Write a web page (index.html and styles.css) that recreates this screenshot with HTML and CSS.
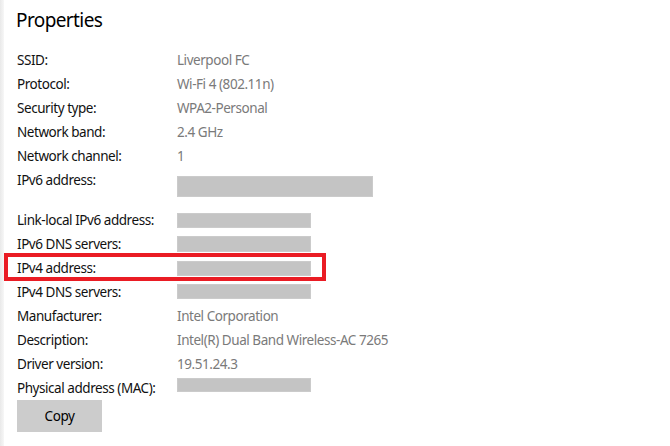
FILE: index.html
```html
<!DOCTYPE html>
<html>
<head>
<meta charset="utf-8">
<link rel="stylesheet" href="styles.css">
</head>
<body>
<div class="page">
  <div class="edge"></div>
  <div class="content">
    <h1 class="title">Properties</h1>
    <div class="props">
      <div class="row"><span class="label">SSID:</span><span class="value">Liverpool FC</span></div>
      <div class="row"><span class="label">Protocol:</span><span class="value">Wi-Fi 4 (802.11n)</span></div>
      <div class="row"><span class="label">Security type:</span><span class="value">WPA2-Personal</span></div>
      <div class="row"><span class="label">Network band:</span><span class="value">2.4 GHz</span></div>
      <div class="row"><span class="label">Network channel:</span><span class="value">1</span></div>
      <div class="row row-tall"><span class="label">IPv6 address:</span><span class="value"><span class="mask mask-v6"></span></span></div>
      <div class="row"><span class="label">Link-local IPv6 address:</span><span class="value"><span class="mask mask-ll"></span></span></div>
      <div class="row"><span class="label">IPv6 DNS servers:</span><span class="value"><span class="mask mask-dns6"></span></span></div>
      <div class="row row-marked"><span class="label">IPv4 address:</span><span class="value"><span class="mask mask-v4"></span></span><span class="highlight"></span></div>
      <div class="row"><span class="label">IPv4 DNS servers:</span><span class="value"><span class="mask mask-dns4"></span></span></div>
      <div class="row"><span class="label">Manufacturer:</span><span class="value">Intel Corporation</span></div>
      <div class="row"><span class="label">Description:</span><span class="value">Intel(R) Dual Band Wireless-AC 7265</span></div>
      <div class="row"><span class="label">Driver version:</span><span class="value">19.51.24.3</span></div>
      <div class="row"><span class="label">Physical address (MAC):</span><span class="value"><span class="mask mask-mac"></span></span></div>
    </div>
    <button class="copy">Copy</button>
  </div>
</div>
</body>
</html>
```
FILE: styles.css
```css
html, body {
  margin: 0;
  padding: 0;
  background: #ffffff;
}
body {
  font-family: "Noto Sans", "Open Sans", sans-serif;
  width: 670px;
  height: 446px;
  overflow: hidden;
}
.page {
  display: flex;
  height: 446px;
}
.edge {
  width: 4px;
  flex: none;
  background: linear-gradient(to right, #e9e9e9, #f7f7f7);
}
.content {
  flex: 1;
  padding-left: 13px;
  display: flex;
  flex-direction: column;
  align-items: flex-start;
}
.title {
  margin: 0;
  height: 48px;
  line-height: 41px;
  font-size: 19px;
  letter-spacing: -0.6px;
  font-weight: 400;
  color: #000;
  margin-left: -1px;
}
.props {
  display: flex;
  flex-direction: column;
}
.row {
  display: grid;
  grid-template-columns: 160px 1fr;
  height: 24px;
  line-height: 24px;
  font-size: 13.5px;
  letter-spacing: -0.45px;
  position: relative;
}
.row-tall {
  height: 40px;
}
.label {
  color: #111;
}
.value {
  color: #7a7a7a;
  position: relative;
}
.mask {
  display: block;
  background: #c4c4c4;
  box-shadow: inset 0 0 0 1px #cbcbcb;
  width: 134px;
  height: 15px;
  margin-top: 5px;
}
.mask-v6 {
  width: 196px;
  height: 21px;
  margin-top: 8px;
}
.mask-dns6 {
  height: 16px;
  margin-top: 4px;
}
.mask-v4 {
  margin-top: 5px;
}
.mask-dns4 {
  margin-top: 4px;
}
.mask-mac {
  height: 14px;
  margin-top: 2px;
}
.highlight {
  position: absolute;
  left: -13px;
  top: -3px;
  width: 314px;
  height: 20px;
  border: 4px solid #ea1c24;
}
.copy {
  margin: 0;
  width: 85px;
  height: 32px;
  border: none;
  background: #cccccc;
  font-family: "Noto Sans", "Open Sans", sans-serif;
  font-size: 13.5px;
  letter-spacing: -0.45px;
  color: #000;
  padding: 0;
}
```
